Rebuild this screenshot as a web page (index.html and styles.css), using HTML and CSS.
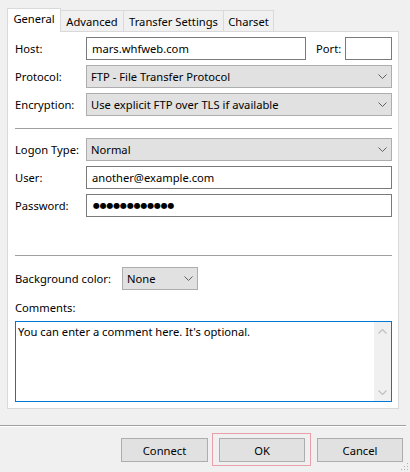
FILE: index.html
```html
<!DOCTYPE html>
<html>
<head>
<meta charset="utf-8">
<link rel="stylesheet" href="styles.css">
</head>
<body>
<div class="dialog">
  <div class="tabs">
    <div class="tab active">General</div>
    <div class="tab t-adv">Advanced</div>
    <div class="tab t-ts">Transfer Settings</div>
    <div class="tab t-cs">Charset</div>
  </div>
  <div class="panel">
    <div class="row r-host">
      <span class="label">Host:</span>
      <div class="input host">mars.whfweb.com</div>
      <span class="port-label">Port:</span>
      <div class="input port"></div>
    </div>
    <div class="row r-gap">
      <span class="label">Protocol:</span>
      <div class="select wide"><span>FTP - File Transfer Protocol</span><svg class="chev" width="9" height="5" viewBox="0 0 9 5"><path d="M0.5 0.5 L4.5 4.5 L8.5 0.5" fill="none" stroke="#606060" stroke-width="1"/></svg></div>
    </div>
    <div class="row r-gap">
      <span class="label">Encryption:</span>
      <div class="select wide"><span>Use explicit FTP over TLS if available</span><svg class="chev" width="9" height="5" viewBox="0 0 9 5"><path d="M0.5 0.5 L4.5 4.5 L8.5 0.5" fill="none" stroke="#606060" stroke-width="1"/></svg></div>
    </div>
    <div class="sep sep1"></div>
    <div class="row r-logon">
      <span class="label">Logon Type:</span>
      <div class="select wide"><span>Normal</span><svg class="chev" width="9" height="5" viewBox="0 0 9 5"><path d="M0.5 0.5 L4.5 4.5 L8.5 0.5" fill="none" stroke="#606060" stroke-width="1"/></svg></div>
    </div>
    <div class="row r-gap">
      <span class="label">User:</span>
      <div class="input wide">another@example.com</div>
    </div>
    <div class="row r-gap">
      <span class="label">Password:</span>
      <div class="input wide"><span class="dots">●●●●●●●●●●●●</span></div>
    </div>
    <div class="sep sep2"></div>
    <div class="row r-bg">
      <span class="label bg-label">Background color:</span>
      <div class="select small"><span>None</span><svg class="chev" width="9" height="5" viewBox="0 0 9 5"><path d="M0.5 0.5 L4.5 4.5 L8.5 0.5" fill="none" stroke="#606060" stroke-width="1"/></svg></div>
    </div>
    <div class="comments-label">Comments:</div>
    <div class="textarea">
      <div class="ta-text">You can enter a comment here. It's optional.</div>
      <div class="scrollbar">
        <svg width="9" height="5" viewBox="0 0 9 5"><path d="M0.5 4.5 L4.5 0.5 L8.5 4.5" fill="none" stroke="#c0c0c0" stroke-width="1.2"/></svg>
        <svg width="9" height="5" viewBox="0 0 9 5"><path d="M0.5 0.5 L4.5 4.5 L8.5 0.5" fill="none" stroke="#c0c0c0" stroke-width="1.2"/></svg>
      </div>
    </div>
  </div>
  <div class="bottom-sep"></div>
  <div class="buttons">
    <div class="btn connect">Connect</div>
    <div class="btn ok">OK</div>
    <div class="btn cancel">Cancel</div>
  </div>
  <svg class="grip" width="8" height="10" viewBox="0 0 8 10">
    <rect x="6" y="2" width="1" height="1" fill="#b0b0b0"/>
    <rect x="6" y="5" width="1" height="1" fill="#b0b0b0"/>
    <rect x="3" y="5" width="1" height="1" fill="#b0b0b0"/>
    <rect x="6" y="8" width="1" height="1" fill="#b0b0b0"/>
    <rect x="3" y="8" width="1" height="1" fill="#b0b0b0"/>
    <rect x="0" y="8" width="1" height="1" fill="#b0b0b0"/>
  </svg>
</div>
</body>
</html>
```
FILE: styles.css
```css
html, body {
  margin: 0;
  padding: 0;
}
body {
  background: #f0f0f0;
  font-family: "Noto Sans", "Open Sans", sans-serif;
  font-size: 11.2px;
  color: #000;
  width: 410px;
  height: 472px;
  overflow: hidden;
}
.dialog {
  position: relative;
  width: 410px;
  height: 472px;
  padding-top: 8px;
  box-sizing: border-box;
}
.tabs {
  display: flex;
  align-items: flex-end;
  margin-left: 7px;
  height: 23px;
  position: relative;
  z-index: 2;
}
.tab {
  box-sizing: border-box;
  height: 21px;
  border: 1px solid #d9d9d9;
  border-bottom: none;
  background: #f0f0f0;
  display: flex;
  align-items: center;
  justify-content: center;
  line-height: 1;
  padding-top: 1px;
}
.tab + .tab {
  border-left: none;
}
.tab.active {
  height: 24px;
  width: 54px;
  background: #fff;
  margin-bottom: -1px;
  padding-top: 0;
  padding-bottom: 3px;
}
.t-adv { width: 63px; }
.t-ts { width: 100px; }
.t-cs { width: 50px; }
.panel {
  position: relative;
  z-index: 1;
  box-sizing: border-box;
  margin-left: 7px;
  width: 392px;
  height: 378px;
  background: #fff;
  border: 1px solid #d9d9d9;
  padding: 5px 6px 0 7px;
}
.row {
  display: flex;
  align-items: center;
  height: 23px;
}
.r-gap { margin-top: 5px; }
.r-logon { margin-top: 9px; }
.r-bg { margin-top: 11px; }
.label {
  width: 71px;
  flex: none;
  white-space: nowrap;
}
.bg-label { width: 107px; }
.input {
  box-sizing: border-box;
  height: 23px;
  border: 1px solid #7a7a7a;
  background: #fff;
  padding-left: 5px;
  display: flex;
  align-items: center;
  white-space: nowrap;
}
.host { width: 220px; }
.port-label {
  margin-left: 10px;
  width: 29px;
}
.port { width: 47px; }
.wide { width: 306px; }
.select {
  box-sizing: border-box;
  height: 23px;
  border: 1px solid #adadad;
  background: #e1e1e1;
  padding-left: 4px;
  padding-right: 4px;
  display: flex;
  align-items: center;
  justify-content: space-between;
  white-space: nowrap;
}
.select.small { width: 76px; }
.chev { flex: none; }
.dots {
  font-family: "DejaVu Sans", sans-serif;
  font-size: 8px;
  letter-spacing: -0.2px;
  padding-left: 1px;
}
.sep {
  height: 1px;
  background: #a0a0a0;
}
.sep1 { margin-top: 12px; }
.sep2 { margin-top: 38px; }
.comments-label {
  margin-top: 10px;
  height: 16px;
  line-height: 16px;
}
.textarea {
  box-sizing: border-box;
  margin-top: 5px;
  height: 81px;
  width: 377px;
  border: 1px solid #0078d7;
  background: #fff;
  display: flex;
}
.ta-text {
  flex: 1;
  padding: 2px 0 0 2px;
  line-height: 16px;
}
.scrollbar {
  width: 17px;
  background: #f0f0f0;
  display: flex;
  flex-direction: column;
  justify-content: space-between;
  align-items: center;
  padding: 7px 0 6px;
  box-sizing: border-box;
}
.bottom-sep {
  margin-top: 16px;
  width: 406px;
  height: 1px;
  background: #a0a0a0;
  border-bottom: 1px solid #fff;
}
.buttons {
  display: flex;
  justify-content: flex-end;
  padding-right: 7px;
  margin-top: 11px;
}
.btn {
  position: relative;
  box-sizing: border-box;
  width: 86px;
  height: 24px;
  border: 1px solid #adadad;
  background: #e1e1e1;
  display: flex;
  align-items: center;
  justify-content: center;
}
.connect { width: 87px; }
.ok { margin-left: 11px; }
.cancel { margin-left: 12px; }
.ok::after {
  content: "";
  position: absolute;
  top: -6px;
  right: -7px;
  bottom: -5px;
  left: -8px;
  border: 1px solid #e8a0aa;
}
.grip {
  position: absolute;
  right: 1px;
  bottom: 1px;
}
```
